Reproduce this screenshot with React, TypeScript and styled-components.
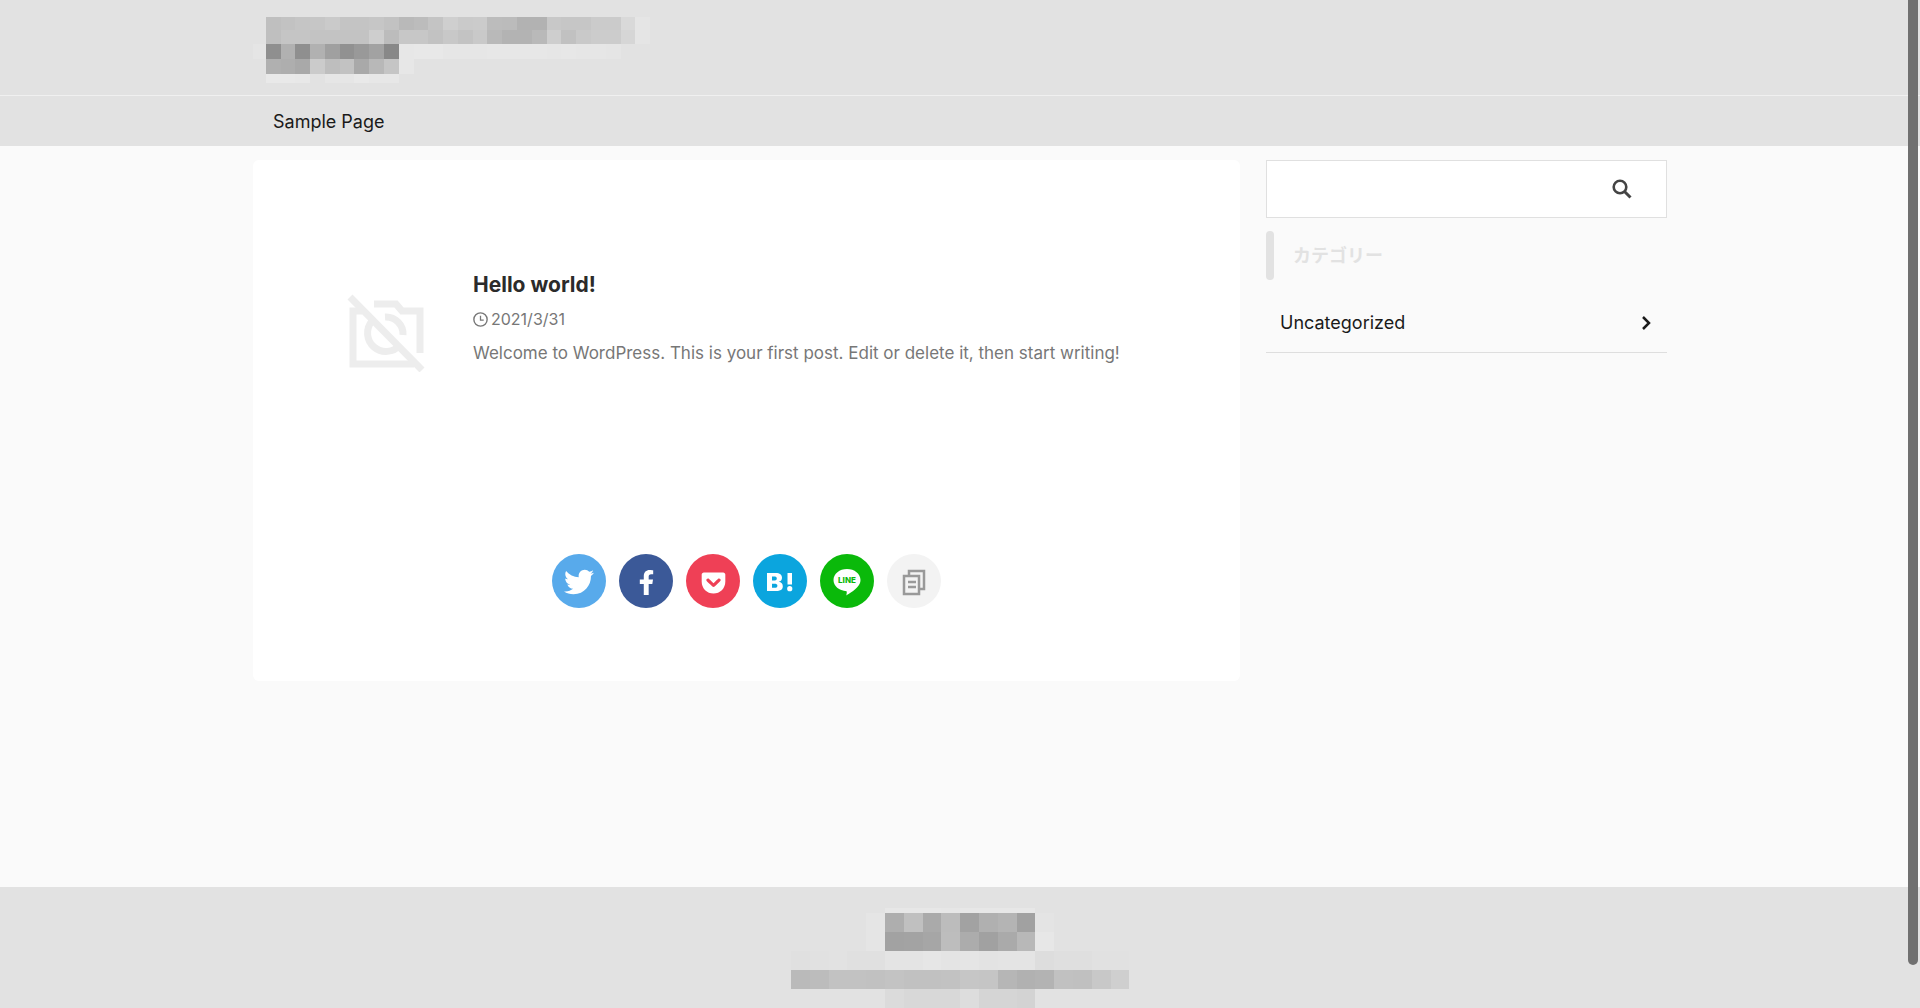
import React from "react";
import styled, { createGlobalStyle } from "styled-components";
import { FaTwitter, FaFacebookF, FaGetPocket } from "react-icons/fa";

const GlobalStyle = createGlobalStyle`
  *, *::before, *::after { box-sizing: border-box; }
  html { scrollbar-width: none; }
  body {
    margin: 0;
    background: #fafafa;
    color: #1a1a1a;
    font-family: Inter, "Noto Sans CJK JP", sans-serif;
    font-size: 18px;
    line-height: 26px;
  }
  a { color: inherit; text-decoration: none; }
  h1, h2, p, ul { margin: 0; padding: 0; }
  ul { list-style: none; }
`;

const Page = styled.div`
  display: flex;
  flex-direction: column;
  height: 100vh;
  min-height: 800px;
  overflow: hidden;
`;

const Container = styled.div`
  width: 100%;
  max-width: 1414px;
  margin: 0 auto;
`;

const Header = styled.header`
  flex: none;
  background: #e2e2e2;
`;

const Brand = styled(Container)`
  padding: 17px 0 12px;
`;

const BrandLink = styled.a`
  display: block;
`;

const NavBar = styled.nav`
  border-top: 1px solid #f0f0f0;
`;

const NavList = styled(Container).attrs({ as: "ul" })`
  display: flex;
`;

const NavLink = styled.a`
  display: block;
  padding: 13px 20px 11px;
`;

const Content = styled(Container)`
  flex: 1;
  display: flex;
  align-items: flex-start;
  gap: 26px;
  padding-top: 14px;
`;

const Card = styled.main`
  flex: 1;
  min-width: 0;
  padding: 108px 80px 73px;
  border-radius: 6px;
  background: #fff;
`;

const Entry = styled.article`
  display: flex;
  gap: 32px;
  padding-left: 14px;
  margin-bottom: 175px;
`;

const Thumb = styled.a`
  flex: none;
  width: 94px;
  padding-top: 26px;
`;

const EntryBody = styled.div`
  min-width: 0;
`;

const EntryTitle = styled.h2`
  font-size: 21px;
  line-height: 34px;
  font-weight: 700;
  color: #2b2b2b;
`;

const EntryDate = styled.p`
  display: flex;
  align-items: center;
  gap: 3px;
  font-size: 16px;
  line-height: 34px;
  color: #777;
`;

const Excerpt = styled.p`
  font-size: 17px;
  line-height: 34px;
  color: #777;
`;

const ShareList = styled.ul`
  display: flex;
  justify-content: center;
  gap: 13px;
`;

const ShareButton = styled.button<{ $tone: string; $ink?: string }>`
  display: flex;
  align-items: center;
  justify-content: center;
  width: 54px;
  height: 54px;
  padding: 2px 0 0;
  border: 0;
  border-radius: 50%;
  background: ${(p) => p.$tone};
  color: ${(p) => p.$ink || "#fff"};
  cursor: pointer;
`;

const Sidebar = styled.aside`
  width: 401px;
  flex: none;
`;

const SearchForm = styled.form`
  display: flex;
  height: 58px;
  border: 1px solid #e0e0e0;
  background: #fff;
`;

const SearchInput = styled.input`
  flex: 1;
  min-width: 0;
  padding: 0 14px;
  border: 0;
  outline: 0;
  background: transparent;
  font: inherit;
`;

const SearchButton = styled.button`
  display: flex;
  align-items: center;
  justify-content: center;
  width: 88px;
  padding: 0;
  border: 0;
  background: transparent;
  color: #444;
  cursor: pointer;
`;

const WidgetTitle = styled.h2`
  display: flex;
  align-items: center;
  gap: 19px;
  margin: 13px 0 14px;
  color: #e2e2e2;
  font-size: 18px;
  line-height: 49px;
  font-weight: 700;

  &::before {
    content: "";
    width: 8px;
    height: 49px;
    border-radius: 4px;
    background: #e2e2e2;
  }
`;

const CategoryLink = styled.a`
  display: flex;
  align-items: center;
  justify-content: space-between;
  padding: 16px 16px 16px 14px;
  border-bottom: 1px solid #dedede;
`;

const Footer = styled.footer`
  flex: none;
  display: flex;
  justify-content: center;
  height: 121px;
  padding-top: 21px;
  background: #e2e2e2;
`;

const ScrollThumb = styled.div`
  position: fixed;
  top: -8px;
  right: 2px;
  bottom: 43px;
  width: 10px;
  border-radius: 5px;
  background: #707070;
`;

type Row = { y: number; h: number; cells: string };

const headerRows: Row[] = [
  { y: 0, h: 13, cells: ".. bf c2 c5 c6 ca c4 c4 c6 c2 b9 bc c4 cf ca cb bc bb b2 b2 c8 c6 c6 cb cb d9 e5" },
  { y: 13, h: 14, cells: ".. bf c5 c5 c3 c3 c3 c3 ce bc c7 c7 c2 c8 c3 c9 b9 b3 b3 b9 ce c1 c9 cc cc d6 e5" },
  { y: 27, h: 15, cells: "e5 8f b1 8f b1 a0 91 99 a2 88 e7 e8 e8 e6 e6 e6 e7 e7 e7 e7 e6 e7 e6 e6 e5" },
  { y: 42, h: 15, cells: ".. b0 ae a9 cb be c2 a9 b8 c5 e7" },
  { y: 57, h: 9, cells: ".. e9 e9 e8 .. e6 e6 e9 e7 e7" },
];

const footerRows: Row[] = [
  { y: 0, h: 5, cells: ".. .. .. .. .. e7 e7 e7 e6 e7 e7 e7 e7" },
  { y: 5, h: 19, cells: ".. .. .. .. e5 ae c0 aa bc a2 b0 b4 a1 e4" },
  { y: 24, h: 19, cells: ".. .. .. .. e5 a2 a3 a6 bd ac a1 aa b8 e7" },
  { y: 43, h: 19, cells: "e0 e1 e2 e0 e0 e4 e4 e6 e4 e5 e3 e4 e4 dd df df e1 e1" },
  { y: 62, h: 19, cells: "ba bc c2 c2 c1 c3 c1 c1 c2 c6 c5 b6 b1 b3 c1 c0 c8 cf" },
  { y: 81, h: 20, cells: ".. .. .. .. .. db d8 d8 d8 dd d5 d5 d3" },
];

type MosaicProps = { rows: Row[]; cell: number; width: number; height: number; inset?: number; label: string };

function Mosaic({ rows, cell, width, height, inset = 0, label }: MosaicProps) {
  return (
    <svg
      width={width}
      height={height}
      viewBox={`${inset} 0 ${width} ${height}`}
      role="img"
      aria-label={label}
      shapeRendering="crispEdges"
      display="block"
    >
      {rows.map((row) =>
        row.cells.split(" ").map((c, i) =>
          c === ".." ? null : (
            <rect key={`${row.y}-${i}`} x={i * cell} y={row.y} width={cell} height={row.h} fill={`#${c}${c}${c}`} />
          )
        )
      )}
    </svg>
  );
}

const NoImageIcon = () => (
  <svg width="78" height="78" viewBox="0 0 78 78" fill="none" stroke="#ededed" strokeWidth="7" role="img" aria-label="No image">
    <path d="M27 10h22l6 7h18v42" />
    <path d="M15 17H6v53h61" />
    <path d="M25 27a17 17 0 1 0 28 24M38 23a17 17 0 0 1 18 18" />
    <path d="M3 3l72 73" />
  </svg>
);

const ClockIcon = () => (
  <svg width="15" height="15" viewBox="0 0 14 14" fill="none" stroke="currentColor" aria-hidden="true">
    <circle cx="7" cy="7" r="6.2" strokeWidth="1.3" />
    <path d="M7 3.5v4h3" strokeWidth="1.2" />
  </svg>
);

const HatenaIcon = () => (
  <svg width="27" height="20" viewBox="0 0 27 20" fill="currentColor" aria-hidden="true">
    <path fillRule="evenodd" d="M0 1h8.500c4.500 0 6.500 1.700 6.500 4.700 0 2.300-1.200 3.600-3.300 4.100 2.700.4 4.100 2 4.100 4.500 0 3.400-2.400 4.700-6.700 4.700H0zM5 4.500v4h1.800c2 0 3-.5 3-2s-1-2-2.800-2zM5 11.800v4h2.200c2.100 0 3.200-.5 3.200-2.100 0-1.500-1.100-1.900-3.200-1.900z" />
    <path d="M20.500 1H25v11.500h-4.500z" />
    <circle cx="22.750" cy="16.700" r="2.600" />
  </svg>
);

const LineIcon = () => (
  <svg width="28" height="27" viewBox="0 0 28 27" aria-hidden="true">
    <path fill="#fff" d="M14 0c7.500 0 13.500 4.900 13.500 11 0 2.700-1.100 5-3.300 7.300-3 3.300-8.300 6.800-11 8.200.4-1.500.8-3.200.4-4.300C6 21.800.5 17 .5 11 .5 4.900 6.500 0 14 0z" />
    <text x="14" y="14" textAnchor="middle" fontFamily="Inter, sans-serif" fontSize="8" fontWeight="800" fill="#0ab90a">LINE</text>
  </svg>
);

const CopyIcon = () => (
  <svg width="24" height="27" viewBox="0 0 24 27" fill="none" stroke="currentColor" strokeWidth="2.5" aria-hidden="true">
    <path d="M7 7V2h15v18h-5M2 7h15v18H2zM6 13h8M6 18h8" />
  </svg>
);

const SearchIcon = () => (
  <svg width="20" height="20" viewBox="0 0 20 20" fill="none" stroke="currentColor" aria-hidden="true">
    <circle cx="8" cy="8" r="6.300" strokeWidth="2.600" />
    <path d="M12.500 12.500l6 6" strokeWidth="3" />
  </svg>
);

const ChevronIcon = () => (
  <svg width="12" height="14" viewBox="0 0 12 14" fill="none" stroke="currentColor" strokeWidth="2.5" aria-hidden="true">
    <path d="M4 1l6 6-6 6" />
  </svg>
);

const shares = [
  { name: "Twitter", tone: "#58aaeb", icon: <FaTwitter size={30} /> },
  { name: "Facebook", tone: "#3b5998", icon: <FaFacebookF size={25} /> },
  { name: "Pocket", tone: "#ef4056", icon: <FaGetPocket size={27} /> },
  { name: "Hatena Bookmark", tone: "#0ba5de", icon: <HatenaIcon /> },
  { name: "LINE", tone: "#0ab90a", icon: <LineIcon /> },
  { name: "Copy link", tone: "#f3f3f3", ink: "#999", icon: <CopyIcon /> },
];

export default function App() {
  return (
    <Page>
      <GlobalStyle />
      <Header>
        <Brand>
          <BrandLink href="#">
            <Mosaic rows={headerRows} cell={14.78} width={400} height={66} inset={2} label="Site title" />
          </BrandLink>
        </Brand>
        <NavBar>
          <NavList>
            <li><NavLink href="#">Sample Page</NavLink></li>
          </NavList>
        </NavBar>
      </Header>
      <Content>
        <Card>
          <Entry>
            <Thumb href="#"><NoImageIcon /></Thumb>
            <EntryBody>
              <EntryTitle><a href="#">Hello world!</a></EntryTitle>
              <EntryDate><ClockIcon /><time dateTime="2021-03-31">2021/3/31</time></EntryDate>
              <Excerpt>Welcome to WordPress. This is your first post. Edit or delete it, then start writing!</Excerpt>
            </EntryBody>
          </Entry>
          <ShareList>
            {shares.map((s) => (
              <li key={s.name}>
                <ShareButton type="button" aria-label={s.name} $tone={s.tone} $ink={s.ink}>{s.icon}</ShareButton>
              </li>
            ))}
          </ShareList>
        </Card>
        <Sidebar>
          <SearchForm role="search">
            <SearchInput type="text" aria-label="Search" />
            <SearchButton type="submit" aria-label="Submit search"><SearchIcon /></SearchButton>
          </SearchForm>
          <WidgetTitle>カテゴリー</WidgetTitle>
          <ul>
            <li><CategoryLink href="#">Uncategorized<ChevronIcon /></CategoryLink></li>
          </ul>
        </Sidebar>
      </Content>
      <Footer>
        <Mosaic rows={footerRows} cell={18.8} width={339} height={101} label="Site name" />
      </Footer>
      <ScrollThumb />
    </Page>
  );
}
